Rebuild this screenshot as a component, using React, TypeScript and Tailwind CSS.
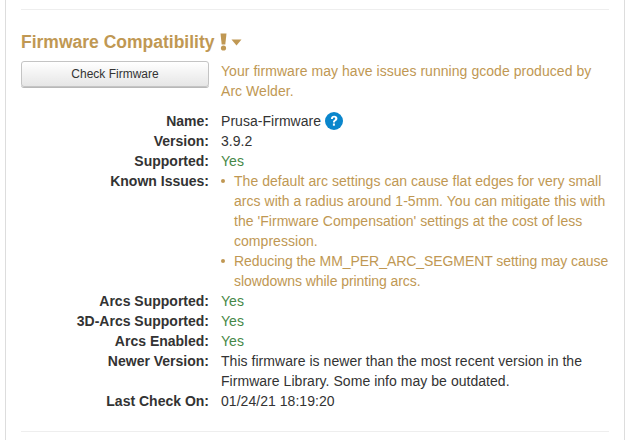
function Row({ label, children }: { label: string; children: React.ReactNode }) {
  return (
    <div className="flex">
      <div className="w-[188px] shrink-0 text-right font-bold">{label}</div>
      <div className="ml-3 min-w-0 flex-1 tracking-[0.04px]">{children}</div>
    </div>
  );
}

const Yes = () => <span className="text-[#468847]">Yes</span>;

export default function App() {
  return (
    <div className="h-[440px] w-[632px] overflow-hidden bg-white font-['Liberation_Sans',Arial,sans-serif] text-[14px] leading-5 text-[#333333]">
      <div className="ml-[5px] h-full w-[620px] border-x border-[#dddddd] px-[15px] pt-[9px]">
        <div className="h-px bg-[#eeeeee]" />
        <div className="mt-[20px] flex h-[24px] items-center text-[17.5px] font-bold leading-6 text-[#c09853]">
          <span>Firmware Compatibility</span>
          <svg className="ml-[5px]" width="7" height="18" viewBox="0 0 7 18">
            <path d="M0.500 0.500h6L5.300 11.500H1.700z" fill="#c09853" />
            <circle cx="3.500" cy="15" r="2.600" fill="#c09853" />
          </svg>
          <svg className="ml-[4px] mt-[1px]" width="11" height="7" viewBox="0 0 11 7">
            <path d="M0.500 0.500h10L5.500 6.500z" fill="#c09853" />
          </svg>
        </div>
        <div className="mt-[5px] flex">
          <button className="mt-[2px] h-[26px] w-[188px] shrink-0 rounded-[3px] border border-[#c4c4c4] bg-gradient-to-b from-[#ffffff] to-[#e6e6e6] text-[12px] leading-[18px] text-[#333333] shadow-[0_1px_0_#b8b8b8]">
            Check Firmware
          </button>
          <p className="ml-3 mt-[2px] flex-1 tracking-[0.05px] text-[#c09853]">
            Your firmware may have issues running gcode produced by
            <br />
            Arc Welder.
          </p>
        </div>
        <div className="mt-[10px]">
          <Row label="Name:">
            <span className="flex items-center">
              Prusa-Firmware
              <svg className="ml-[4px]" width="18" height="18" viewBox="0 0 18 18">
                <circle cx="9" cy="9" r="9" fill="#0a86cc" />
                <path d="M5.900 6.900C6 4.900 7.300 3.700 9.200 3.700c1.900 0 3.200 1.100 3.200 2.700 0 1.200-.6 1.900-1.500 2.500-.8.5-1 .8-1 1.600H8c-.1-1.300.3-2 1.200-2.600.7-.5 1-.8 1-1.400 0-.6-.4-1-1.100-1-.7 0-1.100.5-1.200 1.400z" fill="#ffffff" />
                <rect x="7.900" y="11.500" width="2" height="2.200" fill="#ffffff" />
              </svg>
            </span>
          </Row>
          <Row label="Version:">3.9.2</Row>
          <Row label="Supported:"><Yes /></Row>
          <Row label="Known Issues:">
            <ul className="-mr-[10px] text-[#c09853]">
              <li className="relative pl-[13px]">
                <span className="absolute left-0 top-[8px] size-[3.500px] rounded-full bg-[#c09853]" />
                The default arc settings can cause flat edges for very small arcs with a radius around 1-5mm. You can mitigate this with the 'Firmware Compensation' settings at the cost of less compression.
              </li>
              <li className="relative pl-[13px] tracking-[-0.06px]">
                <span className="absolute left-0 top-[8px] size-[3.500px] rounded-full bg-[#c09853]" />
                Reducing the MM_PER_ARC_SEGMENT setting may cause slowdowns while printing arcs.
              </li>
            </ul>
          </Row>
          <Row label="Arcs Supported:"><Yes /></Row>
          <Row label="3D-Arcs Supported:"><Yes /></Row>
          <Row label="Arcs Enabled:"><Yes /></Row>
          <Row label="Newer Version:">
            This firmware is newer than the most recent version in the Firmware Library. Some info may be outdated.
          </Row>
          <Row label="Last Check On:">01/24/21 18:19:20</Row>
        </div>
        <div className="mt-[20px] h-px bg-[#eeeeee]" />
      </div>
    </div>
  );
}
